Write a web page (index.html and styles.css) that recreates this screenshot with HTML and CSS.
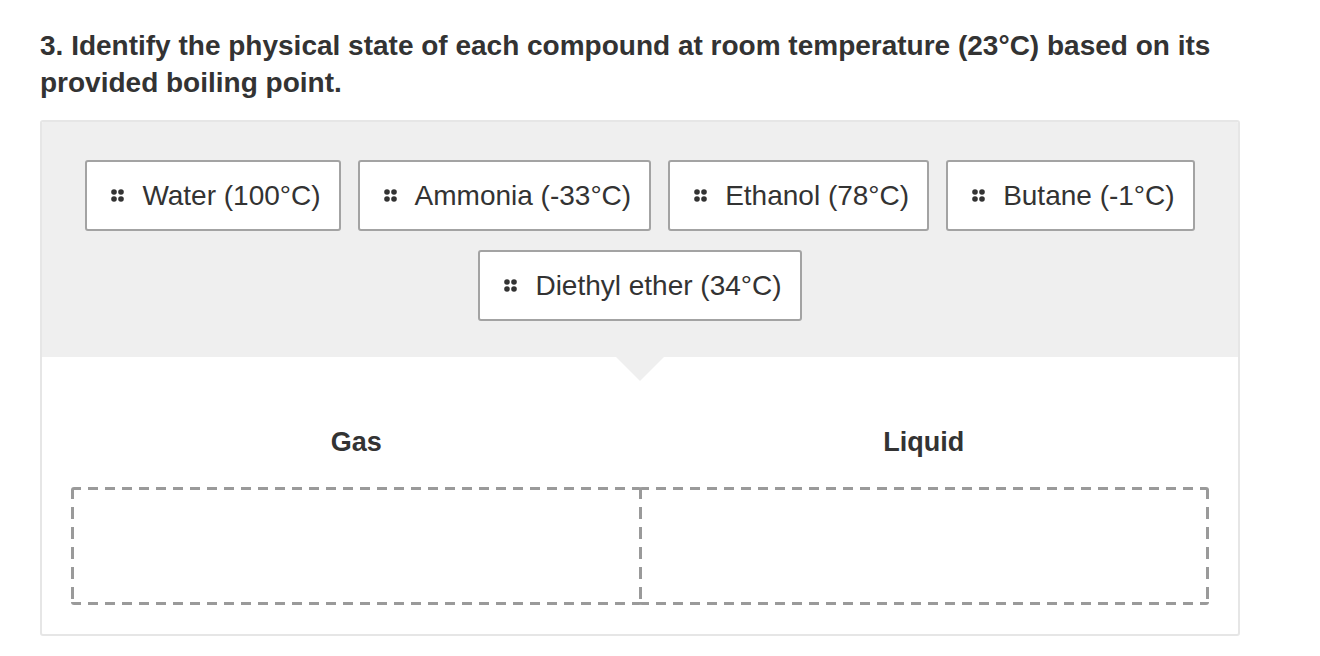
FILE: index.html
```html
<!DOCTYPE html>
<html lang="en">
<head>
    <meta charset="UTF-8">
    <meta name="viewport" content="width=device-width, initial-scale=1.0">
    <title>Physical State Sorting</title>
    <link rel="stylesheet" href="styles.css">
</head>
<body>
    <div class="question">
        <h2 class="prompt">3. Identify the physical state of each compound at room temperature (23°C) based on its provided boiling point.</h2>
        <div class="sorter">
            <div class="bank">
                <div class="chip-row">
                    <div class="chip"><svg class="grip" viewBox="0 0 13 13"><circle cx="3" cy="3" r="2.8"/><circle cx="10" cy="3" r="2.8"/><circle cx="3" cy="10" r="2.8"/><circle cx="10" cy="10" r="2.8"/></svg>Water (100°C)</div>
                    <div class="chip"><svg class="grip" viewBox="0 0 13 13"><circle cx="3" cy="3" r="2.8"/><circle cx="10" cy="3" r="2.8"/><circle cx="3" cy="10" r="2.8"/><circle cx="10" cy="10" r="2.8"/></svg>Ammonia (-33°C)</div>
                    <div class="chip"><svg class="grip" viewBox="0 0 13 13"><circle cx="3" cy="3" r="2.8"/><circle cx="10" cy="3" r="2.8"/><circle cx="3" cy="10" r="2.8"/><circle cx="10" cy="10" r="2.8"/></svg>Ethanol (78°C)</div>
                    <div class="chip"><svg class="grip" viewBox="0 0 13 13"><circle cx="3" cy="3" r="2.8"/><circle cx="10" cy="3" r="2.8"/><circle cx="3" cy="10" r="2.8"/><circle cx="10" cy="10" r="2.8"/></svg>Butane (-1°C)</div>
                </div>
                <div class="chip-row">
                    <div class="chip"><svg class="grip" viewBox="0 0 13 13"><circle cx="3" cy="3" r="2.8"/><circle cx="10" cy="3" r="2.8"/><circle cx="3" cy="10" r="2.8"/><circle cx="10" cy="10" r="2.8"/></svg>Diethyl ether (34°C)</div>
                </div>
            </div>
            <div class="targets">
                <div class="target">
                    <div class="target-label">Gas</div>
                    <div class="drop-zone"></div>
                </div>
                <div class="target">
                    <div class="target-label">Liquid</div>
                    <div class="drop-zone"></div>
                </div>
            </div>
        </div>
    </div>
</body>
</html>
```

FILE: styles.css
```css
body {
    margin: 0;
    font-family: "Liberation Sans", Arial, sans-serif;
    color: #333;
    background-color: #fff;
}
.question {
    width: 1200px;
    padding: 27px 40px 0 40px;
}
.prompt {
    margin: 0 0 19px 0;
    font-size: 28px;
    line-height: 37px;
    font-weight: bold;
    color: #333;
}
.sorter {
    border: 2px solid #e6e6e6;
    border-radius: 3px;
    overflow: hidden;
}
.bank {
    position: relative;
    background-color: #efefef;
    padding: 38px 0 36px 0;
    display: flex;
    flex-direction: column;
    gap: 19px;
}
.bank::after {
    content: "";
    position: absolute;
    left: 50%;
    bottom: -24px;
    margin-left: -24px;
    border-left: 24px solid transparent;
    border-right: 24px solid transparent;
    border-top: 24px solid #efefef;
}
.chip-row {
    display: flex;
    justify-content: center;
    gap: 17px;
}
.chip {
    display: flex;
    align-items: center;
    height: 67px;
    padding: 0 18px 0 24px;
    background-color: #fff;
    border: 2px solid #a3a3a3;
    border-radius: 3px;
    font-size: 28px;
    color: #333;
    white-space: nowrap;
}
.grip {
    width: 13px;
    height: 13px;
    margin-right: 18px;
    fill: #333;
    flex-shrink: 0;
}
.targets {
    display: flex;
    padding: 70px 29px 29px 29px;
}
.target {
    flex: 1;
    display: flex;
    flex-direction: column;
}
.target + .target {
    margin-left: -3px;
}
.target-label {
    text-align: center;
    font-size: 27px;
    font-weight: bold;
    line-height: 30px;
    margin-bottom: 30px;
}
.drop-zone {
    height: 118px;
    border-radius: 3px;
    background:
        repeating-linear-gradient(90deg, #9a9a9a 0 10px, transparent 10px 17px) left top / 100% 3px no-repeat,
        repeating-linear-gradient(90deg, #9a9a9a 0 10px, transparent 10px 17px) left bottom / 100% 3px no-repeat,
        repeating-linear-gradient(180deg, #9a9a9a 0 12px, transparent 12px 20px) left top / 3px 100% no-repeat,
        repeating-linear-gradient(180deg, #9a9a9a 0 12px, transparent 12px 20px) right top / 3px 100% no-repeat;
}
```
